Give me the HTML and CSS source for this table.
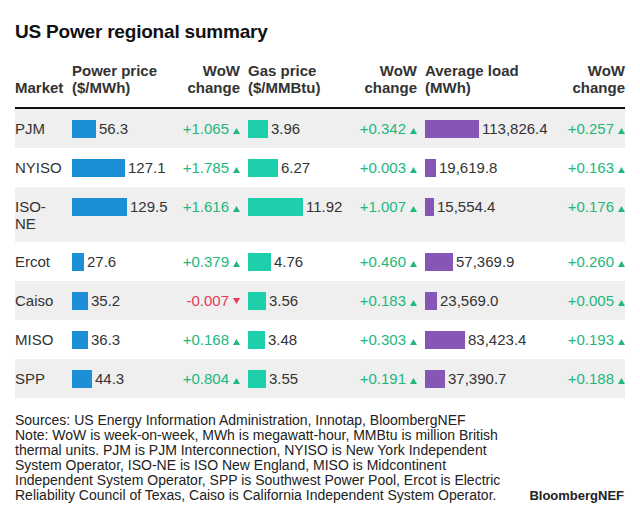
FILE: index.html
```html
<!DOCTYPE html>
<html lang="en">
<head>
<meta charset="utf-8">
<title>US Power regional summary</title>
<link rel="stylesheet" href="styles.css">
</head>
<body>
<div class="page">
  <h1 class="title">US Power regional summary</h1>
  <div class="table">
    <div class="row head">
      <div class="c market">Market</div>
      <div class="c">Power price<br>($/MWh)</div>
      <div class="c num">WoW<br>change</div>
      <div class="c pad">Gas price<br>($/MMBtu)</div>
      <div class="c num">WoW<br>change</div>
      <div class="c pad">Average load<br>(MWh)</div>
      <div class="c num">WoW<br>change</div>
    </div>

    <div class="row alt">
      <div class="c market">PJM</div>
      <div class="c barcell"><span class="bar blue" style="width:24px"></span><span class="val">56.3</span></div>
      <div class="c num up">+1.065<svg class="tri" viewBox="0 0 7 6"><polygon points="3.5,0 7,6 0,6"/></svg></div>
      <div class="c barcell pad"><span class="bar teal" style="width:20px"></span><span class="val">3.96</span></div>
      <div class="c num up">+0.342<svg class="tri" viewBox="0 0 7 6"><polygon points="3.5,0 7,6 0,6"/></svg></div>
      <div class="c barcell pad"><span class="bar purple" style="width:54px"></span><span class="val">113,826.4</span></div>
      <div class="c num up">+0.257<svg class="tri" viewBox="0 0 7 6"><polygon points="3.5,0 7,6 0,6"/></svg></div>
    </div>

    <div class="row">
      <div class="c market">NYISO</div>
      <div class="c barcell"><span class="bar blue" style="width:53px"></span><span class="val">127.1</span></div>
      <div class="c num up">+1.785<svg class="tri" viewBox="0 0 7 6"><polygon points="3.5,0 7,6 0,6"/></svg></div>
      <div class="c barcell pad"><span class="bar teal" style="width:30px"></span><span class="val">6.27</span></div>
      <div class="c num up">+0.003<svg class="tri" viewBox="0 0 7 6"><polygon points="3.5,0 7,6 0,6"/></svg></div>
      <div class="c barcell pad"><span class="bar purple" style="width:11px"></span><span class="val">19,619.8</span></div>
      <div class="c num up">+0.163<svg class="tri" viewBox="0 0 7 6"><polygon points="3.5,0 7,6 0,6"/></svg></div>
    </div>

    <div class="row alt">
      <div class="c market">ISO-NE</div>
      <div class="c barcell"><span class="bar blue" style="width:55px"></span><span class="val">129.5</span></div>
      <div class="c num up">+1.616<svg class="tri" viewBox="0 0 7 6"><polygon points="3.5,0 7,6 0,6"/></svg></div>
      <div class="c barcell pad"><span class="bar teal" style="width:55px"></span><span class="val">11.92</span></div>
      <div class="c num up">+1.007<svg class="tri" viewBox="0 0 7 6"><polygon points="3.5,0 7,6 0,6"/></svg></div>
      <div class="c barcell pad"><span class="bar purple" style="width:9px"></span><span class="val">15,554.4</span></div>
      <div class="c num up">+0.176<svg class="tri" viewBox="0 0 7 6"><polygon points="3.5,0 7,6 0,6"/></svg></div>
    </div>

    <div class="row">
      <div class="c market">Ercot</div>
      <div class="c barcell"><span class="bar blue" style="width:12px"></span><span class="val">27.6</span></div>
      <div class="c num up">+0.379<svg class="tri" viewBox="0 0 7 6"><polygon points="3.5,0 7,6 0,6"/></svg></div>
      <div class="c barcell pad"><span class="bar teal" style="width:23px"></span><span class="val">4.76</span></div>
      <div class="c num up">+0.460<svg class="tri" viewBox="0 0 7 6"><polygon points="3.5,0 7,6 0,6"/></svg></div>
      <div class="c barcell pad"><span class="bar purple" style="width:28px"></span><span class="val">57,369.9</span></div>
      <div class="c num up">+0.260<svg class="tri" viewBox="0 0 7 6"><polygon points="3.5,0 7,6 0,6"/></svg></div>
    </div>

    <div class="row alt">
      <div class="c market">Caiso</div>
      <div class="c barcell"><span class="bar blue" style="width:16px"></span><span class="val">35.2</span></div>
      <div class="c num down">-0.007<svg class="tri dn" viewBox="0 0 7 6"><polygon points="0,0 7,0 3.5,6"/></svg></div>
      <div class="c barcell pad"><span class="bar teal" style="width:18px"></span><span class="val">3.56</span></div>
      <div class="c num up">+0.183<svg class="tri" viewBox="0 0 7 6"><polygon points="3.5,0 7,6 0,6"/></svg></div>
      <div class="c barcell pad"><span class="bar purple" style="width:12px"></span><span class="val">23,569.0</span></div>
      <div class="c num up">+0.005<svg class="tri" viewBox="0 0 7 6"><polygon points="3.5,0 7,6 0,6"/></svg></div>
    </div>

    <div class="row">
      <div class="c market">MISO</div>
      <div class="c barcell"><span class="bar blue" style="width:16px"></span><span class="val">36.3</span></div>
      <div class="c num up">+0.168<svg class="tri" viewBox="0 0 7 6"><polygon points="3.5,0 7,6 0,6"/></svg></div>
      <div class="c barcell pad"><span class="bar teal" style="width:17px"></span><span class="val">3.48</span></div>
      <div class="c num up">+0.303<svg class="tri" viewBox="0 0 7 6"><polygon points="3.5,0 7,6 0,6"/></svg></div>
      <div class="c barcell pad"><span class="bar purple" style="width:40px"></span><span class="val">83,423.4</span></div>
      <div class="c num up">+0.193<svg class="tri" viewBox="0 0 7 6"><polygon points="3.5,0 7,6 0,6"/></svg></div>
    </div>

    <div class="row alt">
      <div class="c market">SPP</div>
      <div class="c barcell"><span class="bar blue" style="width:20px"></span><span class="val">44.3</span></div>
      <div class="c num up">+0.804<svg class="tri" viewBox="0 0 7 6"><polygon points="3.5,0 7,6 0,6"/></svg></div>
      <div class="c barcell pad"><span class="bar teal" style="width:18px"></span><span class="val">3.55</span></div>
      <div class="c num up">+0.191<svg class="tri" viewBox="0 0 7 6"><polygon points="3.5,0 7,6 0,6"/></svg></div>
      <div class="c barcell pad"><span class="bar purple" style="width:20px"></span><span class="val">37,390.7</span></div>
      <div class="c num up">+0.188<svg class="tri" viewBox="0 0 7 6"><polygon points="3.5,0 7,6 0,6"/></svg></div>
    </div>
  </div>

  <div class="footer">
    <p class="notes">Sources: US Energy Information Administration, Innotap, BloombergNEF<br>Note: WoW is week-on-week, MWh is megawatt-hour, MMBtu is million British<br>thermal units. PJM is PJM Interconnection, NYISO is New York Independent<br>System Operator, ISO-NE is ISO New England, MISO is Midcontinent<br>Independent System Operator, SPP is Southwest Power Pool, Ercot is Electric<br>Reliability Council of Texas, Caiso is California Independent System Operator.</p>
    <div class="logo">BloombergNEF</div>
  </div>
</div>
</body>
</html>
```

FILE: styles.css
```css
* { box-sizing: border-box; }

body {
  margin: 0;
  background: #ffffff;
  font-family: "Liberation Sans", Arial, sans-serif;
  color: #333333;
}

.page {
  width: 640px;
  padding: 20px 15px 0;
}

.title {
  margin: 0;
  font-size: 19px;
  line-height: 24px;
  font-weight: 700;
  letter-spacing: -0.2px;
  color: #111111;
}

.table {
  margin-top: 18px;
  width: 610px;
}

.row {
  display: grid;
  grid-template-columns: 57px 100px 68px 100px 77px 123px 85px;
  padding: 11px 0 10px;
  font-size: 15px;
  line-height: 17px;
}

.row.alt { background: #efefef; }

.row.head {
  padding: 0 0 11px;
  font-weight: 700;
  border-bottom: 2px solid #111111;
  color: #333333;
}

.row.head .c { align-self: end; }

.c { min-width: 0; }

.market {
  padding-right: 8px;
}

.num {
  text-align: right;
  white-space: nowrap;
}

.pad { padding-left: 8px; }

.barcell {
  display: flex;
  align-items: flex-start;
  white-space: nowrap;
}

.bar {
  display: block;
  height: 18px;
  flex: none;
}

.bar.blue { background: #1c8fd6; }
.bar.teal { background: #1ecfab; }
.bar.purple { background: #8656b6; }

.val { margin-left: 3px; }

.up { color: #22b77d; }
.down { color: #e63a5c; }

.tri {
  display: inline-block;
  width: 7px;
  height: 6px;
  margin-left: 4px;
  fill: currentColor;
  vertical-align: 0;
}

.tri.dn { vertical-align: 2px; }

.footer {
  display: flex;
  justify-content: space-between;
  align-items: flex-end;
  margin-top: 15px;
  width: 610px;
}

.notes {
  margin: 0;
  font-size: 14px;
  line-height: 15px;
  color: #222222;
  white-space: nowrap;
}

.logo {
  font-size: 13px;
  line-height: 15px;
  font-weight: 700;
  color: #222222;
  margin-right: 1px;
}
```
